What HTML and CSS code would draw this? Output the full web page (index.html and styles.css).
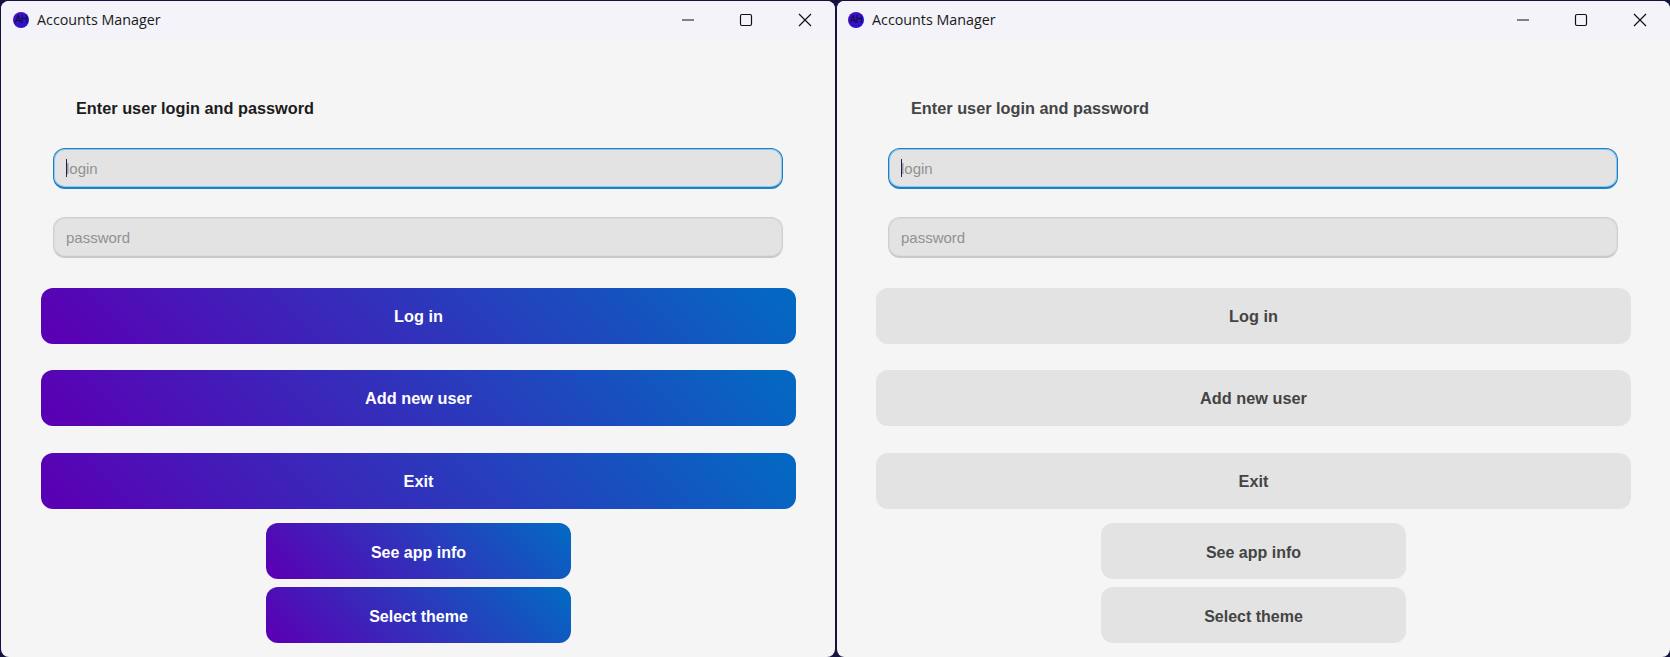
FILE: index.html
```html
<!DOCTYPE html>
<html lang="en">
<head>
<meta charset="utf-8">
<title>Accounts Manager</title>
<link rel="stylesheet" href="styles.css">
</head>
<body>
<svg class="defs" width="0" height="0" aria-hidden="true">
  <symbol id="min" viewBox="0 0 14 14"><path d="M1 7h12" fill="none" stroke="#111" stroke-width="1.2"/></symbol>
  <symbol id="max" viewBox="0 0 14 14"><rect x="1.5" y="1.5" width="11" height="11" rx="1.5" fill="none" stroke="#111" stroke-width="1.2"/></symbol>
  <symbol id="close" viewBox="0 0 14 14"><path d="M1 1l12 12M13 1L1 13" fill="none" stroke="#111" stroke-width="1.2"/></symbol>
</svg>
<main class="desktop">
  <section class="window">
    <header class="titlebar">
      <span class="app-icon"><span class="app-icon-text">AH</span></span>
      <span class="app-title">Accounts Manager</span>
      <span class="controls">
        <svg class="ctl"><use href="#min"/></svg>
        <svg class="ctl"><use href="#max"/></svg>
        <svg class="ctl"><use href="#close"/></svg>
      </span>
    </header>
    <div class="content">
      <h1 class="heading dark">Enter user login and password</h1>
      <div class="field focused"><span class="caret"></span><span class="ph">login</span></div>
      <div class="field second"><span class="ph">password</span></div>
      <button class="btn wide first grad">Log in</button>
      <button class="btn wide grad">Add new user</button>
      <button class="btn wide grad">Exit</button>
      <button class="btn small top grad">See app info</button>
      <button class="btn small grad">Select theme</button>
    </div>
  </section>
  <section class="window">
    <header class="titlebar">
      <span class="app-icon"><span class="app-icon-text">AH</span></span>
      <span class="app-title">Accounts Manager</span>
      <span class="controls">
        <svg class="ctl"><use href="#min"/></svg>
        <svg class="ctl"><use href="#max"/></svg>
        <svg class="ctl"><use href="#close"/></svg>
      </span>
    </header>
    <div class="content">
      <h1 class="heading">Enter user login and password</h1>
      <div class="field focused"><span class="caret"></span><span class="ph">login</span></div>
      <div class="field second"><span class="ph">password</span></div>
      <button class="btn wide first plain">Log in</button>
      <button class="btn wide plain">Add new user</button>
      <button class="btn wide plain">Exit</button>
      <button class="btn small top plain">See app info</button>
      <button class="btn small plain">Select theme</button>
    </div>
  </section>
</main>
</body>
</html>
```
FILE: styles.css
```css
* { box-sizing: border-box; }
html, body { margin: 0; padding: 0; height: 657px; overflow: hidden; background: #14123f; }
.defs { position: absolute; }
.desktop { display: flex; gap: 1px; height: 657px; padding: 1px 0 0 1px; font-family: "Liberation Sans", Arial, sans-serif; }
.window { flex: 0 0 834px; height: 656px; background: #f5f5f5; border-radius: 8px; overflow: hidden; display: flex; flex-direction: column; }
.window + .window { border-left: 1px solid #14123f; }
.titlebar { flex: 0 0 37px; display: flex; align-items: center; background: #f3f3f9; padding-left: 12px; }
.window + .window .titlebar { padding-left: 11px; }
.app-icon { width: 16px; height: 16px; border-radius: 50%; background: linear-gradient(135deg, #4a10c0, #2410d0); display: flex; align-items: center; justify-content: center; overflow: hidden; }
.app-icon-text { font-size: 10px; line-height: 16px; letter-spacing: -0.8px; color: #0c0c30; font-family: "Liberation Sans", sans-serif; }
.app-title { margin-left: 8px; font-family: "Open Sans", sans-serif; font-size: 14.3px; color: #1a1a1a; }
.controls { margin-left: auto; display: flex; }
.ctl { width: 14px; height: 14px; margin-right: 44px; }
.ctl:nth-child(2) { margin-right: 45px; }
.ctl:last-child { margin-right: 23px; }
.content { flex: 1; display: flex; flex-direction: column; align-items: center; padding: 0 39px 0 40px; }
.window + .window .content { padding-left: 39px; }
.heading { align-self: flex-start; margin: 61px 0 0 35px; font-size: 16.3px; line-height: 18px; font-weight: 700; color: #444; }
.heading.dark { color: #1c1c1c; }
.field { align-self: stretch; margin: 31px 13px 0 12px; height: 41px; background: #e3e3e3; border: 1px solid #cfcfcf; border-bottom: 2px solid #c9c9c9; border-radius: 12px; display: flex; align-items: center; padding-left: 12px; font-size: 15px; position: relative; }
.field.focused { border-color: #1d7fc4; box-shadow: inset 0 0 0 1px #8cc8f0; }
.field.second { margin-top: 28px; box-shadow: inset 0 0 0 1px #dcdcdc; }
.ph { color: #919191; }
.caret { position: absolute; left: 12px; top: 10px; height: 18px; border-left: 1px solid #20204a; }
.btn { display: block; border: 0; padding: 1px 0 0; height: 56px; border-radius: 12px; font-family: "Liberation Sans", Arial, sans-serif; font-size: 16.3px; font-weight: 700; }
.wide { align-self: stretch; margin-top: 27px; }
.wide.first { margin-top: 30px; }
.wide.first + .wide { margin-top: 26px; }
.small { width: 305px; margin-top: 8px; padding-top: 3px; font-size: 16px; }
.small.top { margin-top: 14px; }
.grad { color: #fff; background: linear-gradient(45deg, #5a00b4 3%, #0468c2 97%); }
.plain { color: #444; background: #e3e3e3; }
```
